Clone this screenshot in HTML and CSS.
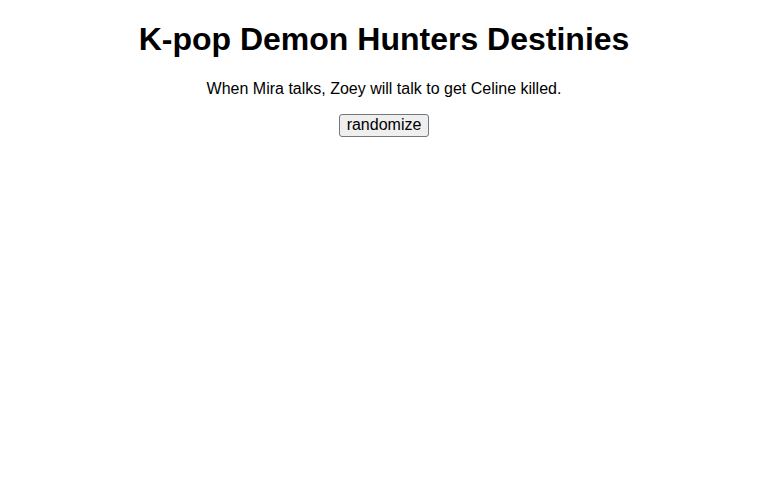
FILE: index.html
```html
<!DOCTYPE html>
<html lang="en">
<head>
<meta charset="utf-8">
<title>K-pop Demon Hunters Destinies</title>
<link rel="stylesheet" href="styles.css">
</head>
<body>
<main class="page">
  <h1 class="title">K-pop Demon Hunters Destinies</h1>
  <p class="destiny">When Mira talks, Zoey will talk to get Celine killed.</p>
  <button class="randomize" type="button">randomize</button>
</main>
</body>
</html>
```

FILE: styles.css
```css
body {
  margin: 0 8px;
  font-family: "Liberation Sans", Arial, sans-serif;
  color: #000;
  background: #fff;
}

.page {
  text-align: center;
}

.title {
  font-size: 32px;
  font-weight: bold;
  margin: 21.44px 0;
}

.destiny {
  font-size: 16px;
  margin: 16px 0;
}

.randomize {
  font-family: "Liberation Sans", Arial, sans-serif;
  font-size: 16px;
  color: #000;
  background: #efefef;
  border: 1px solid #767676;
  border-radius: 3px;
  padding: 1px 7px 2px;
  margin: 0;
}
```
